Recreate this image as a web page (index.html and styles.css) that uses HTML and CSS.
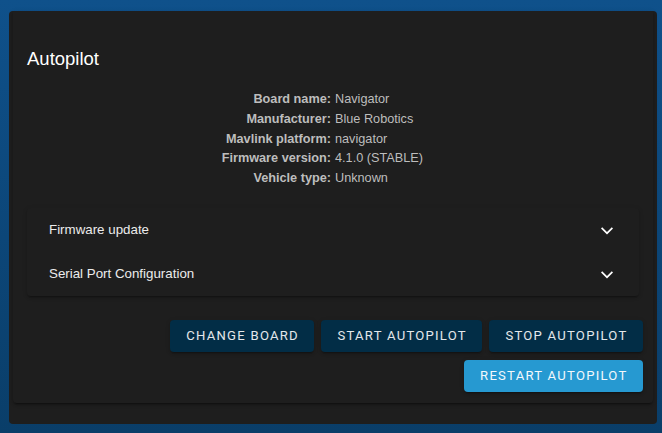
FILE: index.html
```html
<!DOCTYPE html>
<html lang="en">
<head>
<meta charset="utf-8">
<title>Autopilot</title>
<link rel="stylesheet" href="styles.css">
</head>
<body>
<div class="outer-card">
  <div class="inner-card">
    <h1 class="card-title">Autopilot</h1>
    <div class="info-grid">
      <span class="info-label">Board name:</span><span class="info-value">Navigator</span>
      <span class="info-label">Manufacturer:</span><span class="info-value">Blue Robotics</span>
      <span class="info-label">Mavlink platform:</span><span class="info-value">navigator</span>
      <span class="info-label">Firmware version:</span><span class="info-value">4.1.0 (STABLE)</span>
      <span class="info-label">Vehicle type:</span><span class="info-value">Unknown</span>
    </div>
    <div class="panels">
      <div class="panel-header">
        <span>Firmware update</span>
        <svg class="chevron" viewBox="0 0 20 20"><path d="M5.2 7.2 L10 12 L14.8 7.2 L16 8.4 L10 14.4 L4 8.4 Z" fill="currentColor"/></svg>
      </div>
      <div class="panel-header">
        <span>Serial Port Configuration</span>
        <svg class="chevron" viewBox="0 0 20 20"><path d="M5.2 7.2 L10 12 L14.8 7.2 L16 8.4 L10 14.4 L4 8.4 Z" fill="currentColor"/></svg>
      </div>
    </div>
    <div class="actions">
      <button class="btn btn-dark">Change board</button>
      <button class="btn btn-dark">Start autopilot</button>
      <button class="btn btn-dark">Stop autopilot</button>
      <button class="btn btn-light">Restart autopilot</button>
    </div>
  </div>
</div>
</body>
</html>
```

FILE: styles.css
```css
* { box-sizing: border-box; }
html {
  height: 100%;
  background: linear-gradient(180deg, #0f518b 0%, #0c4678 55%, #0a3e69 100%);
}
body {
  margin: 0;
  height: 100%;
  font-family: "Liberation Sans", Arial, sans-serif;
  overflow: hidden;
}
.outer-card {
  margin: 11px 0 0 9px;
  width: 648px;
  height: 413px;
  background: #1e1e1e;
  border-radius: 4px;
  padding: 0 4px 21px 4px;
}
.inner-card {
  background: #1e1e1e;
  border-radius: 0 0 4px 4px;
  box-shadow: 0 3px 1px -2px rgba(0,0,0,.25), 0 2px 2px 0 rgba(0,0,0,.16), 0 1px 5px 0 rgba(0,0,0,.14);
  padding: 32px 0 11px 0;
}
.card-title {
  margin: 0;
  padding: 0 14px;
  font-size: 18.5px;
  font-weight: 400;
  line-height: 32px;
  color: #ffffff;
}
.info-grid {
  margin: 15px 14px 0 14px;
  display: grid;
  grid-template-columns: 1fr 1fr;
  column-gap: 4px;
  font-size: 12.7px;
  line-height: 19.75px;
  color: #bdbdbd;
}
.info-label {
  text-align: right;
  font-weight: 700;
}
.info-value {
  text-align: left;
}
.panels {
  margin: 19px 14px 0 14px;
  background: #1e1e1e;
  border-radius: 4px;
  box-shadow: 0 3px 1px -2px rgba(0,0,0,.2), 0 2px 2px 0 rgba(0,0,0,.14), 0 1px 5px 0 rgba(0,0,0,.12);
}
.panel-header {
  height: 44px;
  display: flex;
  align-items: center;
  justify-content: space-between;
  padding: 0 22px;
  font-size: 13.33px;
  color: #ececec;
}
.chevron {
  width: 20px;
  height: 20px;
  color: #ffffff;
}
.actions {
  margin-top: 24px;
  padding: 0 10px 0 14px;
  display: flex;
  flex-wrap: wrap;
  justify-content: flex-end;
  gap: 8px 7px;
}
.btn {
  height: 32px;
  padding: 0 15.5px 0 16px;
  border: none;
  border-radius: 4px;
  font-family: Roboto, "Liberation Sans", sans-serif;
  font-size: 13.1px;
  font-weight: 400;
  letter-spacing: 1.25px;
  text-transform: uppercase;
  color: #e4e8eb;
  cursor: pointer;
  box-shadow: 0 3px 1px -2px rgba(0,0,0,.2), 0 2px 2px 0 rgba(0,0,0,.14), 0 1px 5px 0 rgba(0,0,0,.12);
}
.btn-dark { background: #022d46; }
.btn-light { background: #2699d1; color: #f2f8fc; }
```
